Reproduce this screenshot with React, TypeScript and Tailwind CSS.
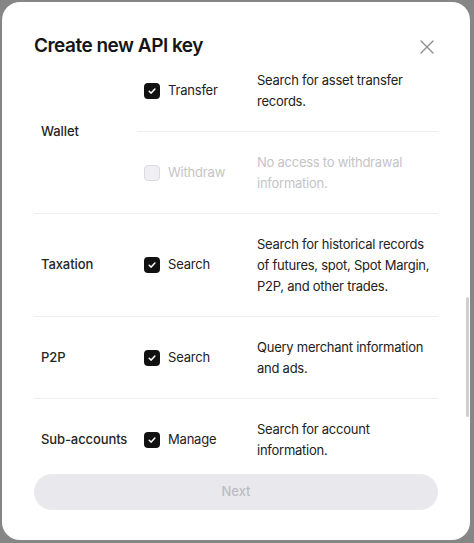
import { useEffect, useRef } from "react";

type Permission = {
  name: string;
  description: string;
  checked: boolean;
  disabled?: boolean;
};

type Group = {
  label: string;
  permissions: Permission[];
};

const groups: Group[] = [
  {
    label: "Wallet",
    permissions: [
      { name: "Transfer", description: "Search for asset transfer records.", checked: true },
      {
        name: "Withdraw",
        description: "No access to withdrawal information.",
        checked: false,
        disabled: true,
      },
    ],
  },
  {
    label: "Taxation",
    permissions: [
      {
        name: "Search",
        description: "Search for historical records of futures, spot, Spot Margin, P2P, and other trades.",
        checked: true,
      },
    ],
  },
  {
    label: "P2P",
    permissions: [
      { name: "Search", description: "Query merchant information and ads.", checked: true },
    ],
  },
  {
    label: "Sub-accounts",
    permissions: [
      { name: "Manage", description: "Search for account information.", checked: true },
    ],
  },
];

function Checkbox({ checked, disabled }: { checked: boolean; disabled?: boolean }) {
  if (disabled) {
    return <span className="h-4 w-4 shrink-0 rounded-[4px] border border-[#dcdce0] bg-[#f0f0f3]" />;
  }
  return (
    <span className="flex h-4 w-4 shrink-0 items-center justify-center rounded-[4px] bg-[#111111]">
      {checked && (
        <svg width="10" height="10" viewBox="0 0 10 10" fill="none">
          <path
            d="M2.2 5.2 4.2 7.1 7.9 3"
            stroke="white"
            strokeWidth="1.5"
            strokeLinecap="round"
            strokeLinejoin="round"
          />
        </svg>
      )}
    </span>
  );
}

function PermissionRow({ permission }: { permission: Permission }) {
  const muted = permission.disabled;
  return (
    <div className="flex items-center py-[19.5px] pl-[7px] pr-[7px]">
      <label className="flex w-[113px] shrink-0 items-center gap-2">
        <Checkbox checked={permission.checked} disabled={permission.disabled} />
        <span
          className={`text-[13px] tracking-[-0.2px] ${muted ? "text-[#c4c4c8]" : "text-[#222222]"}`}
        >
          {permission.name}
        </span>
      </label>
      <p
        className={`flex-1 text-[13px] leading-[21px] tracking-[-0.25px] ${
          muted ? "text-[#c4c4c8]" : "text-[#222222]"
        }`}
      >
        {permission.description}
      </p>
    </div>
  );
}

export default function App() {
  const scrollRef = useRef<HTMLDivElement>(null);

  useEffect(() => {
    if (scrollRef.current) scrollRef.current.scrollTop = 20;
  }, []);

  return (
    <div className="h-[543px] w-[474px] overflow-hidden bg-[#868686] pl-[2px] pt-[2px] font-['Inter','Noto_Sans',sans-serif]">
      <div className="relative flex h-[538px] w-[468px] flex-col rounded-[18px] bg-white">
        <header className="flex items-center justify-between px-8 pb-3 pt-8">
          <h1 className="text-[19px] font-semibold leading-6 tracking-[-0.5px] text-[#151515]">
            Create new API key
          </h1>
          <button type="button" className="mr-[4px] mt-[2px] text-[#8c8c8c]" aria-label="Close">
            <svg width="14" height="14" viewBox="0 0 14 14" fill="none">
              <path d="M1 1 13 13M13 1 1 13" stroke="currentColor" strokeWidth="1.3" strokeLinecap="round" />
            </svg>
          </button>
        </header>

        <div ref={scrollRef} className="flex-1 overflow-y-auto px-8 [scrollbar-width:none]">
          <div className="divide-y divide-[#efeff1]">
            {groups.map((group) => (
              <div key={group.label} className="flex items-center">
                <div className="w-[103px] shrink-0 pl-[7px] text-[13px] font-medium tracking-[-0.1px] text-[#262626]">
                  {group.label}
                </div>
                <div className="flex-1 divide-y divide-[#efeff1]">
                  {group.permissions.map((permission) => (
                    <PermissionRow key={permission.name} permission={permission} />
                  ))}
                </div>
              </div>
            ))}
          </div>
        </div>

        <div className="px-8 pb-[30px] pt-3">
          <button
            type="button"
            disabled
            className="h-9 w-full rounded-full bg-[#e9e9ed] text-[13px] font-medium text-[#bcbcc1]"
          >
            Next
          </button>
        </div>

        <span className="absolute right-[1px] top-[295px] h-[120px] w-[3px] rounded-full bg-[#cfcfd2]" />
      </div>
    </div>
  );
}
